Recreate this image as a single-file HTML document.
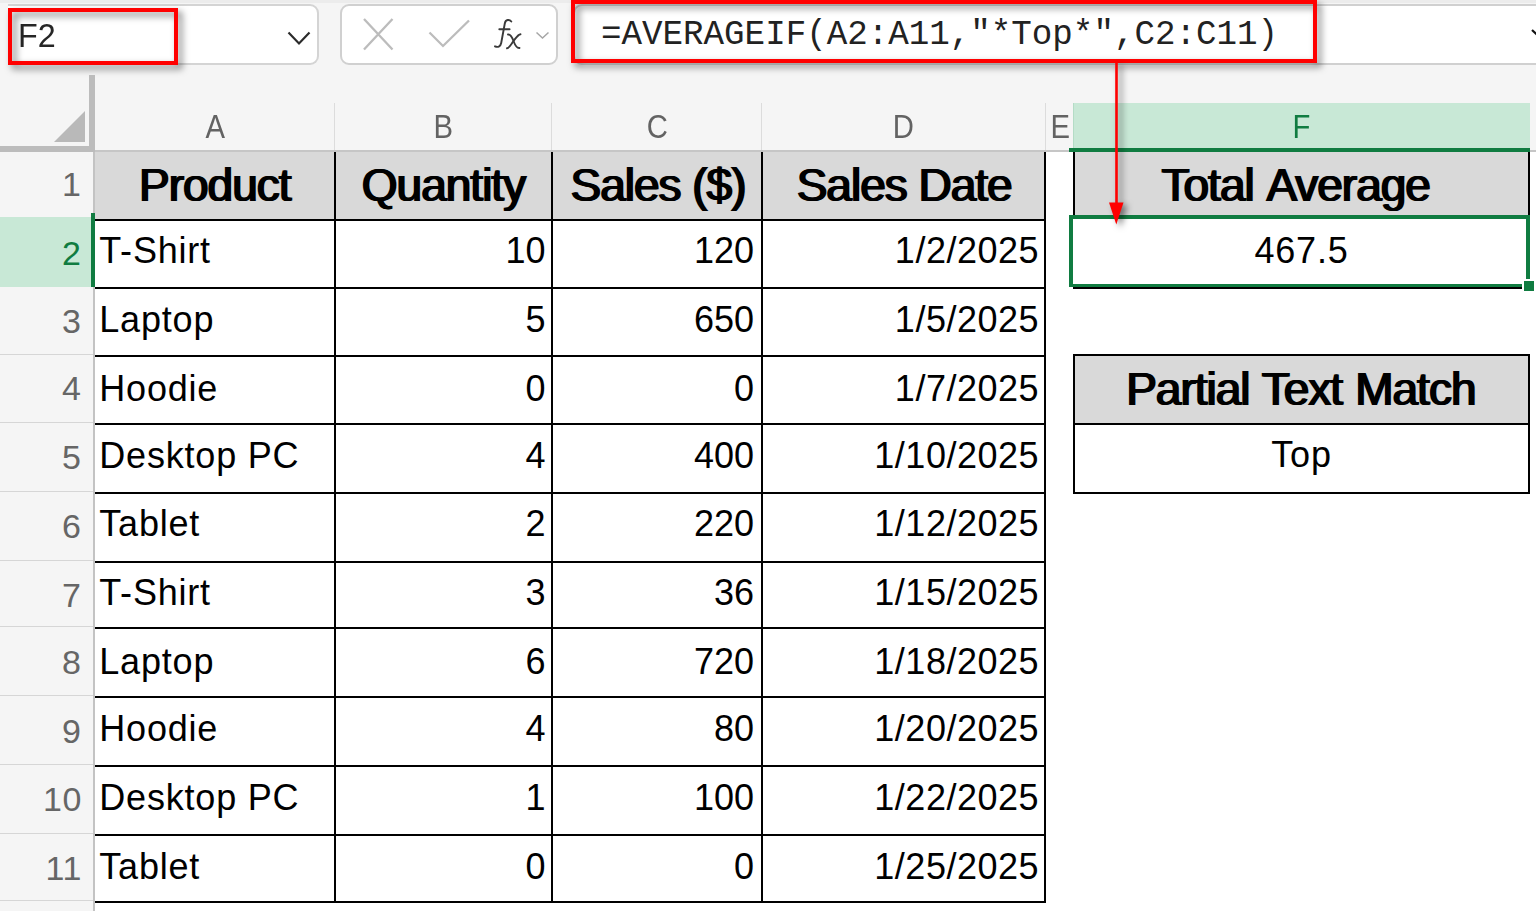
<!DOCTYPE html>
<html><head><meta charset="utf-8">
<style>
html,body{margin:0;padding:0;}
body{width:1536px;height:911px;overflow:hidden;position:relative;background:#f5f5f5;font-family:"Liberation Sans",sans-serif;color:#000;}
.abs{position:absolute;}
.box{position:absolute;background:#fff;border:2px solid #d0d0d0;border-radius:9px;box-sizing:border-box;}
.red{position:absolute;box-sizing:border-box;border:4px solid #ff0000;filter:drop-shadow(4.5px 4.5px 3.5px rgba(0,0,0,0.5));}
.colh{position:absolute;top:103px;height:47px;font-size:34px;line-height:47px;text-align:center;color:#636363;}
.colh span{display:inline-block;transform:scaleX(0.86);}
.rowh{position:absolute;left:0;width:81px;text-align:right;font-size:34px;color:#666;}
.cell{position:absolute;box-sizing:border-box;font-size:36px;letter-spacing:0.8px;white-space:nowrap;}
.hd{font-size:46px;letter-spacing:-1px;text-align:center;text-shadow:1px 0 0 #000,2px 0 0 #000;}
.ln{position:absolute;background:#000;}
</style></head><body>
<div class="abs" style="left:0;top:0;width:1536px;height:3px;background:#ececec;"></div>

<!-- top bar boxes -->
<div class="box" style="left:8px;top:4px;width:311px;height:61px;border-color:#d4d4d4;border-left:none;border-radius:0 9px 9px 0;"></div>
<div class="box" style="left:340px;top:4px;width:218px;height:61px;"></div>
<div class="box" style="left:573px;top:4px;width:980px;height:61px;border-radius:9px 0 0 9px;"></div>

<div class="abs" style="left:17.5px;top:15px;font-size:34px;line-height:40px;color:#262626;transform:scaleX(0.95);transform-origin:0 0;">F2</div>
<svg class="abs" style="left:284px;top:28px;" width="30" height="22" viewBox="0 0 30 22"><path d="M4.5 4.5 L15 15.5 L25.5 4.5" fill="none" stroke="#2b2b2b" stroke-width="2.2"/></svg>

<!-- X, check, fx -->
<svg class="abs" style="left:355px;top:10px;" width="50" height="50" viewBox="0 0 50 50"><path d="M9 9 L37.5 39.5 M37.5 9 L9 39.5" fill="none" stroke="#bcbcbc" stroke-width="2.3"/></svg>
<svg class="abs" style="left:420px;top:10px;" width="60" height="50" viewBox="0 0 60 50"><path d="M9.5 22.5 L23 36 L49 10.5" fill="none" stroke="#bcbcbc" stroke-width="2.3"/></svg>
<svg class="abs" style="left:485px;top:10px;" width="50" height="50" viewBox="0 0 50 50"><g fill="none" stroke="#3a3a3a" stroke-width="1.9" stroke-linecap="round"><path d="M26.3 11.5 C24.5 9.2 20.6 9.2 19.8 13.5 L16.2 33 C15.5 36.8 12.6 37.6 10 36.3"/><path d="M14.3 19.3 L24.6 19.3"/><path d="M23 24.5 C25.5 24 27 27 28.5 31 C30 35 31.5 38.5 34.5 38"/><path d="M35.5 24.3 C33 24.5 31 28 28.5 31 C26 34.5 24.5 38 22 38.3"/></g></svg>
<svg class="abs" style="left:534px;top:29px;" width="18" height="14" viewBox="0 0 18 14"><path d="M2.5 3.5 L8.5 9 L14.5 3.5" fill="none" stroke="#a6a6a6" stroke-width="1.5"/></svg>
<svg class="abs" style="left:1526px;top:26px;" width="18" height="14" viewBox="0 0 18 14"><path d="M6 4 L13 10.5" fill="none" stroke="#111" stroke-width="2.2"/></svg>

<!-- formula text -->
<div class="abs" style="left:601px;top:15px;font-family:'Liberation Mono',monospace;font-size:34.2px;line-height:40px;color:#222;white-space:pre;">=AVERAGEIF(A2:A11,"*Top*",C2:C11)</div>

<!-- red highlight boxes -->
<div class="red" style="left:8px;top:8px;width:170px;height:57px;"></div>
<div class="red" style="left:571px;top:0px;width:746px;height:63px;"></div>

<!-- sheet white -->
<div class="abs" style="left:95px;top:152px;width:1441px;height:759px;background:#fff;"></div>

<!-- header separators -->
<div class="abs" style="left:95px;top:150px;width:1441px;height:2px;background:#c6c6c6;"></div>
<div class="abs" style="left:89px;top:75px;width:6px;height:77px;background:#bcbcbc;"></div>
<div class="abs" style="left:0;top:146px;width:95px;height:6px;background:#bcbcbc;"></div>
<svg class="abs" style="left:54px;top:111px;" width="32" height="32" viewBox="0 0 32 32"><path d="M31 0 L31 31 L0 31 Z" fill="#b9b9b9"/></svg>
<div class="abs" style="left:93px;top:152px;width:2px;height:759px;background:#c3c3c3;"></div>

<!-- column headers -->
<div class="abs" style="left:1073px;top:103px;width:457px;height:45px;background:#c8e8d6;border-left:1px solid #b4dcc6;box-sizing:border-box;"></div>
<div class="colh" style="left:95px;width:240px;"><span>A</span></div>
<div class="colh" style="left:335px;width:217px;"><span>B</span></div>
<div class="colh" style="left:552px;width:210px;"><span>C</span></div>
<div class="colh" style="left:762px;width:283px;"><span>D</span></div>
<div class="colh" style="left:1046px;width:28px;"><span>E</span></div>
<div class="colh" style="left:1072px;width:458px;color:#107c41;"><span>F</span></div>
<div class="abs" style="left:334px;top:103px;width:1px;height:47px;background:#dcdcdc;"></div>
<div class="abs" style="left:551px;top:103px;width:1px;height:47px;background:#dcdcdc;"></div>
<div class="abs" style="left:761px;top:103px;width:1px;height:47px;background:#dcdcdc;"></div>
<div class="abs" style="left:1045px;top:103px;width:1px;height:47px;background:#dcdcdc;"></div>
<div class="abs" style="left:1069px;top:148px;width:461px;height:4px;background:#107c41;"></div>

<!-- row headers -->
<div class="abs" style="left:0;top:217px;width:91px;height:70px;background:#c8e8d6;"></div>
<div class="abs" style="left:91px;top:213px;width:4px;height:74px;background:#107c41;"></div>

<div class="abs" style="left:95px;top:152px;width:950px;height:67px;background:#d9d9d9;"></div>
<div class="cell hd" style="left:93.8px;top:159px;width:240px;line-height:52px;">Product</div>
<div class="cell hd" style="left:334px;top:159px;width:217px;line-height:52px;">Quantity</div>
<div class="cell hd" style="left:552px;top:159px;width:210px;line-height:52px;">Sales ($)</div>
<div class="cell hd" style="left:761.7px;top:159px;width:283px;line-height:52px;">Sales Date</div>
<div class="rowh" style="top:164px;line-height:40px;color:#666;">1</div>
<div class="rowh" style="top:233px;line-height:40px;color:#107c41;">2</div>
<div class="rowh" style="top:301px;line-height:40px;color:#666;">3</div>
<div class="abs" style="left:0;top:354px;width:93px;height:1px;background:#d6d6d6;"></div>
<div class="rowh" style="top:368px;line-height:40px;color:#666;">4</div>
<div class="abs" style="left:0;top:422px;width:93px;height:1px;background:#d6d6d6;"></div>
<div class="rowh" style="top:437px;line-height:40px;color:#666;">5</div>
<div class="abs" style="left:0;top:491px;width:93px;height:1px;background:#d6d6d6;"></div>
<div class="rowh" style="top:506px;line-height:40px;color:#666;">6</div>
<div class="abs" style="left:0;top:560px;width:93px;height:1px;background:#d6d6d6;"></div>
<div class="rowh" style="top:575px;line-height:40px;color:#666;">7</div>
<div class="abs" style="left:0;top:626px;width:93px;height:1px;background:#d6d6d6;"></div>
<div class="rowh" style="top:642px;line-height:40px;color:#666;">8</div>
<div class="abs" style="left:0;top:695px;width:93px;height:1px;background:#d6d6d6;"></div>
<div class="rowh" style="top:711px;line-height:40px;color:#666;">9</div>
<div class="abs" style="left:0;top:764px;width:93px;height:1px;background:#d6d6d6;"></div>
<div class="rowh" style="top:779px;line-height:40px;color:#666;letter-spacing:0.8px;width:82.3px;">10</div>
<div class="abs" style="left:0;top:833px;width:93px;height:1px;background:#d6d6d6;"></div>
<div class="rowh" style="top:848px;line-height:40px;color:#666;letter-spacing:0.8px;width:82.3px;">11</div>
<div class="abs" style="left:0;top:900px;width:93px;height:1px;background:#d6d6d6;"></div>
<div class="abs" style="left:0;top:900px;width:93px;height:1px;background:#d6d6d6;"></div>
<div class="cell" style="left:99.3px;top:230px;line-height:42px;">T-Shirt</div>
<div class="cell" style="right:990.5px;top:230px;line-height:42px;text-align:right;letter-spacing:0px;">10</div>
<div class="cell" style="right:782px;top:230px;line-height:42px;text-align:right;letter-spacing:0px;">120</div>
<div class="cell" style="right:497px;top:230px;line-height:42px;text-align:right;letter-spacing:0.5px;">1/2/2025</div>
<div class="cell" style="left:99.3px;top:299px;line-height:42px;">Laptop</div>
<div class="cell" style="right:990.5px;top:299px;line-height:42px;text-align:right;letter-spacing:0px;">5</div>
<div class="cell" style="right:782px;top:299px;line-height:42px;text-align:right;letter-spacing:0px;">650</div>
<div class="cell" style="right:497px;top:299px;line-height:42px;text-align:right;letter-spacing:0.5px;">1/5/2025</div>
<div class="cell" style="left:99.3px;top:368px;line-height:42px;">Hoodie</div>
<div class="cell" style="right:990.5px;top:368px;line-height:42px;text-align:right;letter-spacing:0px;">0</div>
<div class="cell" style="right:782px;top:368px;line-height:42px;text-align:right;letter-spacing:0px;">0</div>
<div class="cell" style="right:497px;top:368px;line-height:42px;text-align:right;letter-spacing:0.5px;">1/7/2025</div>
<div class="cell" style="left:99.3px;top:435px;line-height:42px;">Desktop PC</div>
<div class="cell" style="right:990.5px;top:435px;line-height:42px;text-align:right;letter-spacing:0px;">4</div>
<div class="cell" style="right:782px;top:435px;line-height:42px;text-align:right;letter-spacing:0px;">400</div>
<div class="cell" style="right:497px;top:435px;line-height:42px;text-align:right;letter-spacing:0.5px;">1/10/2025</div>
<div class="cell" style="left:99.3px;top:503px;line-height:42px;">Tablet</div>
<div class="cell" style="right:990.5px;top:503px;line-height:42px;text-align:right;letter-spacing:0px;">2</div>
<div class="cell" style="right:782px;top:503px;line-height:42px;text-align:right;letter-spacing:0px;">220</div>
<div class="cell" style="right:497px;top:503px;line-height:42px;text-align:right;letter-spacing:0.5px;">1/12/2025</div>
<div class="cell" style="left:99.3px;top:572px;line-height:42px;">T-Shirt</div>
<div class="cell" style="right:990.5px;top:572px;line-height:42px;text-align:right;letter-spacing:0px;">3</div>
<div class="cell" style="right:782px;top:572px;line-height:42px;text-align:right;letter-spacing:0px;">36</div>
<div class="cell" style="right:497px;top:572px;line-height:42px;text-align:right;letter-spacing:0.5px;">1/15/2025</div>
<div class="cell" style="left:99.3px;top:641px;line-height:42px;">Laptop</div>
<div class="cell" style="right:990.5px;top:641px;line-height:42px;text-align:right;letter-spacing:0px;">6</div>
<div class="cell" style="right:782px;top:641px;line-height:42px;text-align:right;letter-spacing:0px;">720</div>
<div class="cell" style="right:497px;top:641px;line-height:42px;text-align:right;letter-spacing:0.5px;">1/18/2025</div>
<div class="cell" style="left:99.3px;top:708px;line-height:42px;">Hoodie</div>
<div class="cell" style="right:990.5px;top:708px;line-height:42px;text-align:right;letter-spacing:0px;">4</div>
<div class="cell" style="right:782px;top:708px;line-height:42px;text-align:right;letter-spacing:0px;">80</div>
<div class="cell" style="right:497px;top:708px;line-height:42px;text-align:right;letter-spacing:0.5px;">1/20/2025</div>
<div class="cell" style="left:99.3px;top:777px;line-height:42px;">Desktop PC</div>
<div class="cell" style="right:990.5px;top:777px;line-height:42px;text-align:right;letter-spacing:0px;">1</div>
<div class="cell" style="right:782px;top:777px;line-height:42px;text-align:right;letter-spacing:0px;">100</div>
<div class="cell" style="right:497px;top:777px;line-height:42px;text-align:right;letter-spacing:0.5px;">1/22/2025</div>
<div class="cell" style="left:99.3px;top:846px;line-height:42px;">Tablet</div>
<div class="cell" style="right:990.5px;top:846px;line-height:42px;text-align:right;letter-spacing:0px;">0</div>
<div class="cell" style="right:782px;top:846px;line-height:42px;text-align:right;letter-spacing:0px;">0</div>
<div class="cell" style="right:497px;top:846px;line-height:42px;text-align:right;letter-spacing:0.5px;">1/25/2025</div>
<div class="ln" style="left:95px;top:219px;width:951px;height:2px;"></div>
<div class="ln" style="left:95px;top:287px;width:951px;height:2px;"></div>
<div class="ln" style="left:95px;top:355px;width:951px;height:2px;"></div>
<div class="ln" style="left:95px;top:423px;width:951px;height:2px;"></div>
<div class="ln" style="left:95px;top:492px;width:951px;height:2px;"></div>
<div class="ln" style="left:95px;top:561px;width:951px;height:2px;"></div>
<div class="ln" style="left:95px;top:627px;width:951px;height:2px;"></div>
<div class="ln" style="left:95px;top:696px;width:951px;height:2px;"></div>
<div class="ln" style="left:95px;top:765px;width:951px;height:2px;"></div>
<div class="ln" style="left:95px;top:834px;width:951px;height:2px;"></div>
<div class="ln" style="left:95px;top:901px;width:951px;height:2px;"></div>
<div class="ln" style="left:334px;top:152px;width:2px;height:751px;"></div>
<div class="ln" style="left:551px;top:152px;width:2px;height:751px;"></div>
<div class="ln" style="left:761px;top:152px;width:2px;height:751px;"></div>
<div class="ln" style="left:1044px;top:152px;width:2px;height:751px;"></div>
<div class="abs" style="left:1073px;top:152px;width:457px;height:65px;background:#d9d9d9;"></div>
<div class="ln" style="left:1073px;top:152px;width:2px;height:65px;"></div>
<div class="ln" style="left:1528px;top:152px;width:2px;height:65px;"></div>
<div class="cell hd" style="left:1066.25px;top:159px;width:457px;line-height:52px;word-spacing:3.5px;">Total Average</div>
<div class="ln" style="left:1073px;top:287px;width:457px;height:2px;"></div>
<div class="abs" style="left:1069px;top:215px;width:461px;height:72px;box-sizing:border-box;border:4px solid #107c41;border-bottom-width:3px;"></div>
<div class="abs" style="left:1522px;top:279px;width:13px;height:13px;background:#fff;"></div>
<div class="abs" style="left:1524px;top:281px;width:10px;height:10px;background:#107c41;"></div>
<div class="cell" style="left:1073px;top:230px;width:457px;text-align:center;line-height:42px;">467.5</div>
<div class="abs" style="left:1073px;top:354px;width:457px;height:140px;box-sizing:border-box;border:2px solid #000;background:#fff;"></div>
<div class="abs" style="left:1075px;top:356px;width:453px;height:67px;background:#d9d9d9;"></div>
<div class="ln" style="left:1073px;top:423px;width:457px;height:2px;"></div>
<div class="cell hd" style="left:1071.3px;top:363px;width:457px;line-height:52px;word-spacing:1.3px;">Partial Text Match</div>
<div class="cell" style="left:1073px;top:434px;width:457px;text-align:center;line-height:42px;">Top</div>
<svg class="abs" style="left:1090px;top:55px;filter:drop-shadow(4.5px 3px 3px rgba(0,0,0,0.5));" width="60" height="185" viewBox="0 0 60 185"><rect x="25.2" y="7" width="2.6" height="145" fill="#ff0000"/><path d="M19 147.5 L33.5 147.5 L26.3 169.5 Z" fill="#ff0000"/></svg>
</body></html>
